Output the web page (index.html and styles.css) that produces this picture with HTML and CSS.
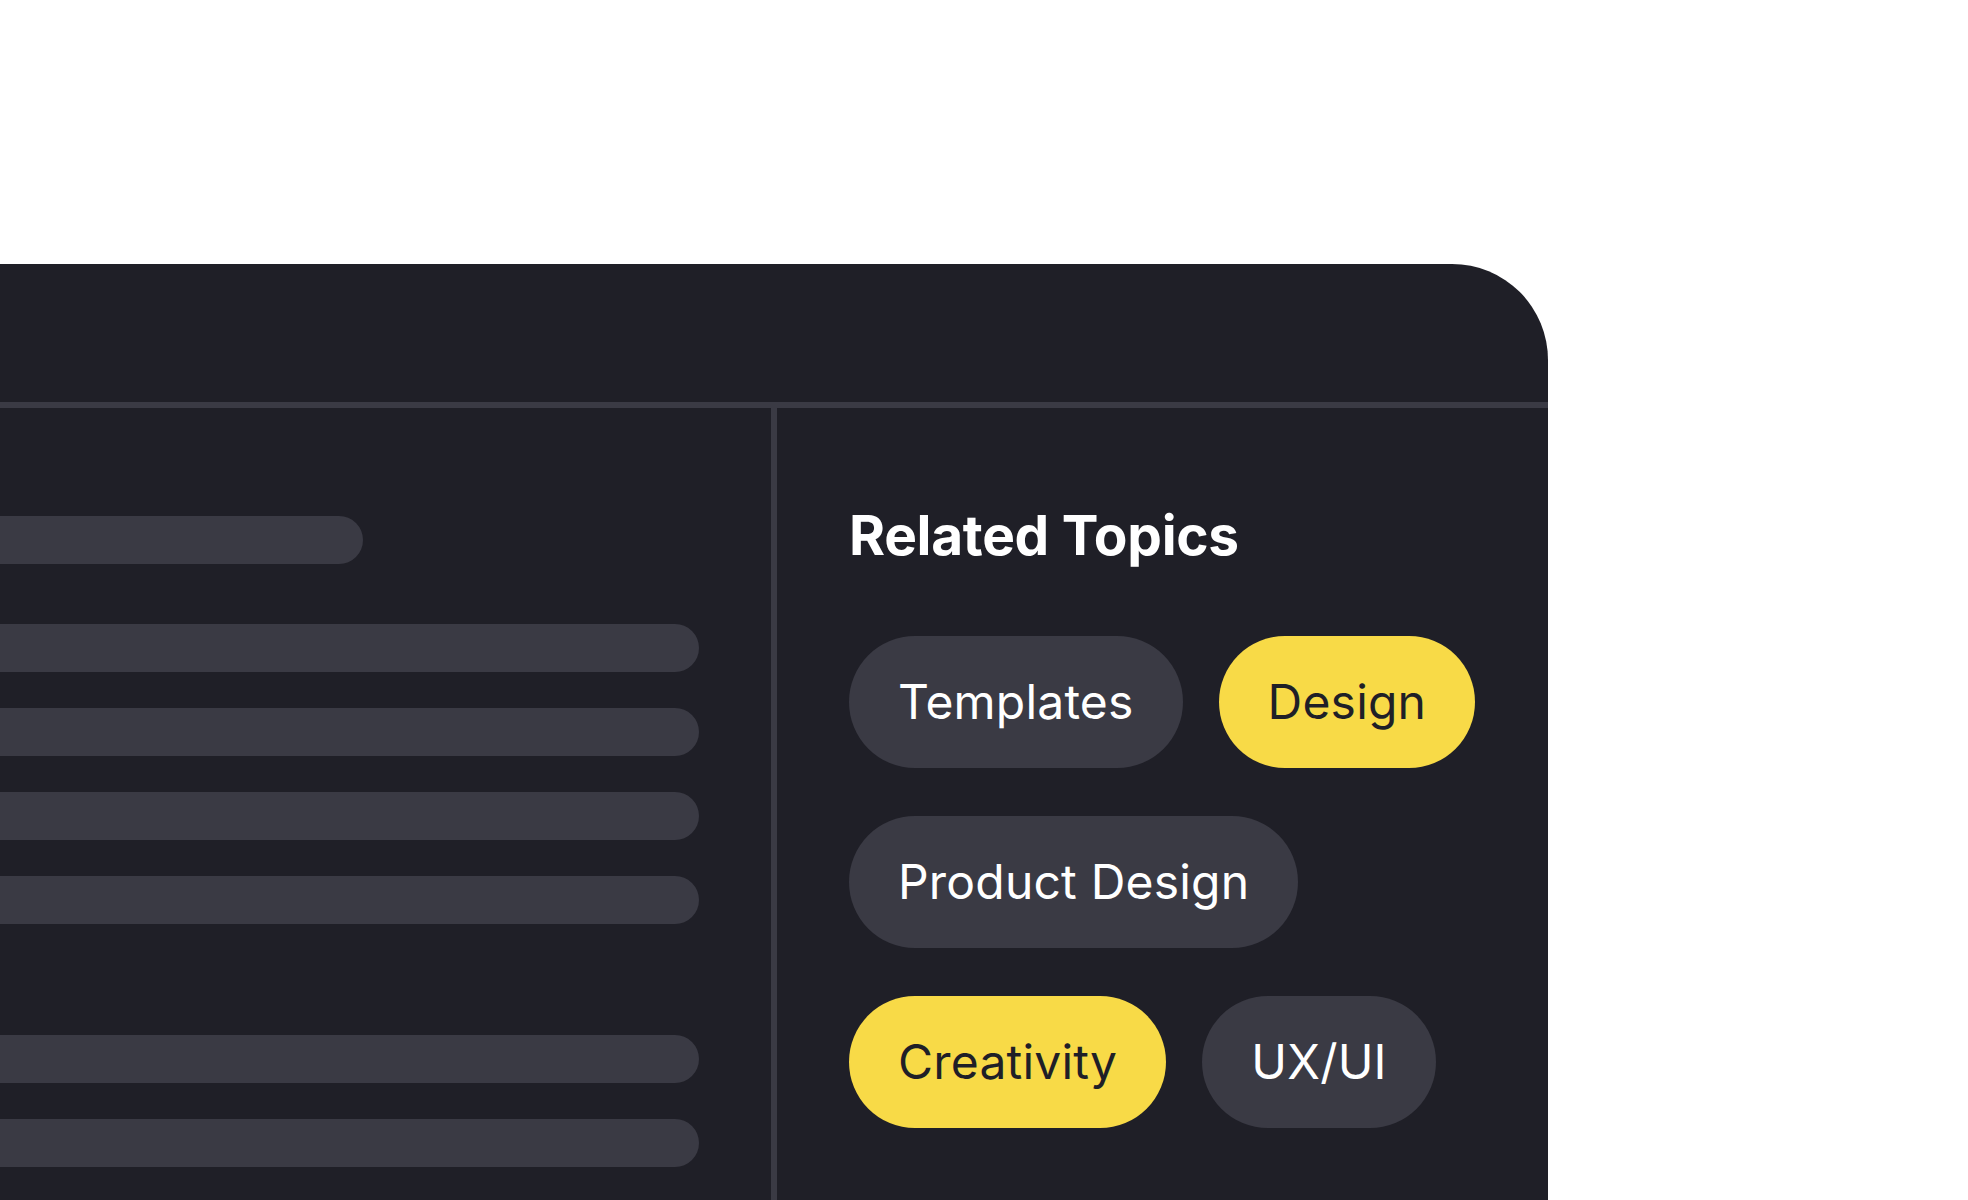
FILE: index.html
```html
<!DOCTYPE html>
<html lang="en">
<head>
    <meta charset="UTF-8">
    <meta name="viewport" content="width=device-width, initial-scale=1.0">
    <title>Related Topics</title>
    <link rel="stylesheet" href="styles.css">
</head>
<body>
    <div class="panel">
        <div class="panel-header"></div>

        <div class="panel-body">
            <div class="article">
                <div class="line short"></div>
                <div class="paragraph">
                    <div class="line"></div>
                    <div class="line"></div>
                    <div class="line"></div>
                    <div class="line"></div>
                </div>
                <div class="paragraph">
                    <div class="line"></div>
                    <div class="line"></div>
                </div>
            </div>

            <aside class="topics">
                <h2>Related Topics</h2>
                <div class="tags">
                    <span class="tag">Templates</span>
                    <span class="tag active">Design</span>
                    <span class="tag">Product Design</span>
                    <span class="tag active">Creativity</span>
                    <span class="tag">UX/UI</span>
                </div>
            </aside>
        </div>
    </div>
</body>
</html>
```

FILE: styles.css
```css
body {
    margin: 0;
    padding: 0;
    height: 1200px;
    overflow: hidden;
    background: #ffffff;
    font-family: Inter, "Noto Sans", sans-serif;
}

.panel {
    margin-top: 264px;
    margin-left: -100px;
    width: 1648px;
    height: 936px;
    overflow: hidden;
    background-color: #1f1f27;
    border-top-right-radius: 96px;
}

.panel-header {
    height: 138px;
    border-bottom: 6px solid #3a3a44;
}

.panel-body {
    display: flex;
    height: 792px;
}

.article {
    width: 799px;
    padding: 108px 72px 0 0;
    border-right: 6px solid #3a3a44;
    display: flex;
    flex-direction: column;
    align-items: flex-end;
    gap: 60px;
}

.paragraph {
    display: flex;
    flex-direction: column;
    gap: 36px;
    margin-bottom: 51px;
}

.line {
    width: 799px;
    height: 48px;
    flex-shrink: 0;
    border-radius: 24px;
    background-color: #3a3a44;
}

.line.short {
    width: 463px;
    align-self: flex-start;
}

.topics {
    flex: 1;
    padding: 94px 24px 0 72px;
}

.topics h2 {
    margin: 0 0 68px 0;
    font-size: 55px;
    line-height: 66px;
    font-weight: 700;
    color: #ffffff;
    letter-spacing: -0.3px;
}

.tags {
    display: flex;
    flex-wrap: wrap;
    gap: 48px 36px;
}

.tag {
    padding: 36px 49px;
    font-size: 48px;
    line-height: 60px;
    letter-spacing: 0.2px;
    border-radius: 66px;
    background-color: #3a3a44;
    color: #ffffff;
}

.tag.active {
    background-color: #f8da47;
    color: #1f1f27;
}
```
